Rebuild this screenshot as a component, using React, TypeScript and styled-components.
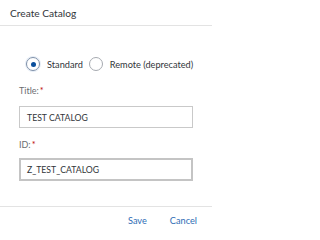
import React from "react";
import styled, { createGlobalStyle } from "styled-components";

const GlobalStyle = createGlobalStyle`
  html, body {
    margin: 0;
    padding: 0;
    background: #ffffff;
  }
  body {
    font-family: Lato, "Liberation Sans", Arial, sans-serif;
  }
`;

const Dialog = styled.div`
  width: 212px;
  height: 233px;
  display: flex;
  flex-direction: column;
  background: #ffffff;
  color: #32363a;
  overflow: hidden;
`;

const Header = styled.div`
  height: 25px;
  display: flex;
  align-items: center;
  padding: 0 10px;
  font-size: 10.2px;
  border-bottom: 1px solid #e3e3e3;
`;

const Content = styled.div`
  flex: 1;
  display: flex;
  flex-direction: column;
  padding: 31px 19px 0 19px;
`;

const RadioGroup = styled.div`
  display: flex;
  align-items: center;
  height: 14px;
  padding-left: 7px;
  margin-bottom: 13px;
`;

const RadioOption = styled.label`
  display: flex;
  align-items: center;
  gap: 7px;
  margin-right: 6px;
  font-size: 9.2px;
  white-space: nowrap;
  color: #32363a;
`;

const RadioCircle = styled.span<{ $checked?: boolean }>`
  flex: none;
  width: 14px;
  height: 14px;
  box-sizing: border-box;
  border-radius: 50%;
  border: 1px solid ${(p) => (p.$checked ? "#7d8fa8" : "#a6aab0")};
  display: flex;
  align-items: center;
  justify-content: center;
  box-shadow: ${(p) => (p.$checked ? "0 0 0 1px #e6edf6" : "none")};

  &::after {
    content: "";
    width: 5px;
    height: 5px;
    border-radius: 50%;
    background: #0b4f9c;
    display: ${(p) => (p.$checked ? "block" : "none")};
  }
`;

const Label = styled.div<{ $gap: number }>`
  height: 14px;
  line-height: 14px;
  font-size: 9px;
  color: #6a6d70;
  margin-bottom: ${(p) => p.$gap}px;
`;

const Required = styled.span`
  color: #bb0000;
  margin-left: 1px;
`;

const Input = styled.div<{ $focused?: boolean }>`
  box-sizing: border-box;
  height: ${(p) => (p.$focused ? "23px" : "22px")};
  border: ${(p) => (p.$focused ? "2px solid #c4c4c4" : "1px solid #c9c9c9")};
  padding: 0 ${(p) => (p.$focused ? "6px" : "7px")};
  display: flex;
  align-items: center;
  font-size: 8.7px;
  color: #32363a;
  margin-bottom: 10px;
`;

const Footer = styled.div`
  height: 26px;
  border-top: 1px solid #e3e3e3;
  display: flex;
  align-items: center;
  justify-content: flex-end;
  gap: 23px;
  padding: 0 15px 0 0;
`;

const TextButton = styled.button`
  background: none;
  border: none;
  padding: 0;
  font-family: inherit;
  font-size: 9.2px;
  color: #2e6cb5;
  cursor: pointer;
`;

const App = () => {
  return (
    <>
      <GlobalStyle />
      <Dialog>
        <Header>Create Catalog</Header>
        <Content>
          <RadioGroup>
            <RadioOption>
              <RadioCircle $checked />
              Standard
            </RadioOption>
            <RadioOption>
              <RadioCircle />
              Remote (deprecated)
            </RadioOption>
          </RadioGroup>
          <Label $gap={8}>
            Title:<Required>*</Required>
          </Label>
          <Input>TEST CATALOG</Input>
          <Label $gap={6}>
            ID:<Required>*</Required>
          </Label>
          <Input $focused>Z_TEST_CATALOG</Input>
        </Content>
        <Footer>
          <TextButton>Save</TextButton>
          <TextButton>Cancel</TextButton>
        </Footer>
      </Dialog>
    </>
  );
};

export default App;
